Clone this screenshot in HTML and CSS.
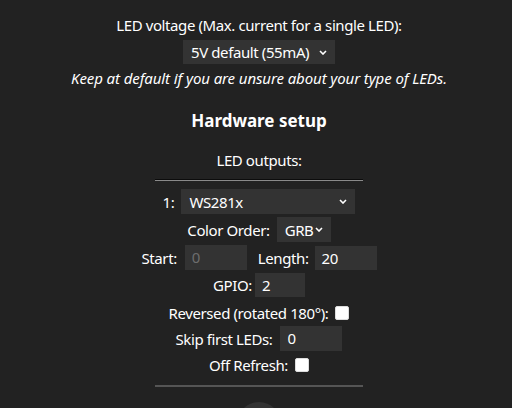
FILE: index.html
```html
<!DOCTYPE html>
<html>
<head>
<meta charset="utf-8">
<link rel="stylesheet" href="styles.css">
</head>
<body>
<div class="page">
  <div class="l1">LED voltage (Max. current for a single LED):</div>
  <div class="sel sel-volt"><span>5V default (55mA)</span><svg class="chev" width="8" height="5" viewBox="0 0 8 5"><path d="M1 1 L4 4 L7 1" fill="none" stroke="#fff" stroke-width="1.6"/></svg></div>
  <div class="hint">Keep at default if you are unsure about your type of LEDs.</div>
  <h3 class="head">Hardware setup</h3>
  <div class="outs">LED outputs:</div>
  <div class="hr hr-top"></div>
  <div class="row r-type"><span class="lbl">1:</span><div class="sel sel-type"><span>WS281x</span><svg class="chev" width="8" height="5" viewBox="0 0 8 5"><path d="M1 1 L4 4 L7 1" fill="none" stroke="#fff" stroke-width="1.6"/></svg></div></div>
  <div class="row r-co"><span class="lbl">Color Order:</span><div class="sel sel-co"><span>GRB</span><svg class="chev" width="8" height="5" viewBox="0 0 8 5"><path d="M1 1 L4 4 L7 1" fill="none" stroke="#fff" stroke-width="1.6"/></svg></div></div>
  <div class="row r-sl"><span class="lbl">Start:</span><div class="inp inp-start dis">0</div><span class="lbl lbl-len">Length:</span><div class="inp inp-len">20</div></div>
  <div class="row r-gpio"><span class="lbl lbl-gpio">GPIO:</span><div class="inp inp-gpio">2</div></div>
  <div class="row r-rev"><span class="lbl">Reversed (rotated 180°):</span><span class="cb"></span></div>
  <div class="row r-skip"><span class="lbl">Skip first LEDs:</span><div class="inp inp-skip">0</div></div>
  <div class="row r-off"><span class="lbl">Off Refresh:</span><span class="cb"></span></div>
  <div class="hr hr-bot"></div>
  <div class="circle"></div>
</div>
</body>
</html>
```
FILE: styles.css
```css
html, body {
  margin: 0;
  padding: 0;
  background: #222;
  height: 408px;
  overflow: hidden;
}
body {
  color: #fff;
  font-family: "Noto Sans", "Open Sans", sans-serif;
  font-size: 15px;
  letter-spacing: -0.4px;
}
.page {
  display: flex;
  flex-direction: column;
  align-items: center;
  padding-left: 6px;
  height: 408px;
  overflow: hidden;
}
.l1 {
  margin-top: 15px;
  line-height: 20px;
}
.sel {
  display: flex;
  align-items: center;
  justify-content: space-between;
  background: #333;
  box-sizing: border-box;
  padding: 0 8px;
  height: 24px;
  line-height: 24px;
}
.sel-volt {
  margin-top: 5px;
  width: 152px;
  padding-right: 8px;
}
.hint {
  margin-top: 4px;
  line-height: 20px;
  font-style: italic;
  letter-spacing: -0.1px;
}
.head {
  margin: 21px 0 0;
  font-size: 17px;
  line-height: 24px;
  font-weight: bold;
  letter-spacing: 0;
}
.outs {
  margin-top: 17px;
  line-height: 20px;
}
.hr {
  width: 208px;
  box-sizing: border-box;
  flex-shrink: 0;
}
.hr-top {
  margin-top: 9px;
  height: 2px;
  border-top: 1px solid #0c0c0c;
  border-bottom: 1px solid #8a8a8a;
}
.hr-bot {
  margin-top: 9px;
  height: 2px;
  background: #555;
}
.row {
  display: flex;
  align-items: center;
  flex-shrink: 0;
}
.lbl {
  line-height: 20px;
}
.r-type { margin-top: 8px; height: 25px; gap: 7px; }
.sel-type { width: 174px; height: 25px; }
.r-co { margin-top: 3px; height: 25px; gap: 7px; }
.sel-co { width: 54px; height: 25px; }
.r-sl { margin-top: 3px; height: 25px; gap: 8px; }
.lbl-len { margin-left: 3px; margin-right: -2px; }
.r-gpio { margin-top: 3px; height: 24px; gap: 3px; }
.r-rev { margin-top: 4px; height: 23px; gap: 7px; }
.r-skip { margin-top: 2px; height: 25px; gap: 8px; }
.r-off { margin-top: 3px; height: 22px; gap: 7px; }
.inp {
  background: #333;
  box-sizing: border-box;
  height: 25px;
  line-height: 25px;
  padding-left: 7px;
}
.inp-start { width: 62px; }
.inp-len { width: 62px; height: 24px; line-height: 24px; }
.inp-gpio { width: 50px; height: 24px; line-height: 24px; }
.inp-skip { width: 62px; }
.dis { color: #6d6d6d; }
.cb {
  width: 14px;
  height: 14px;
  box-sizing: border-box;
  background: #fff;
  border-radius: 2px;
  border: 1px solid #ddd;
}
.circle {
  margin-top: 15px;
  width: 44px;
  height: 44px;
  border-radius: 50%;
  background: #333;
  flex-shrink: 0;
}
```
